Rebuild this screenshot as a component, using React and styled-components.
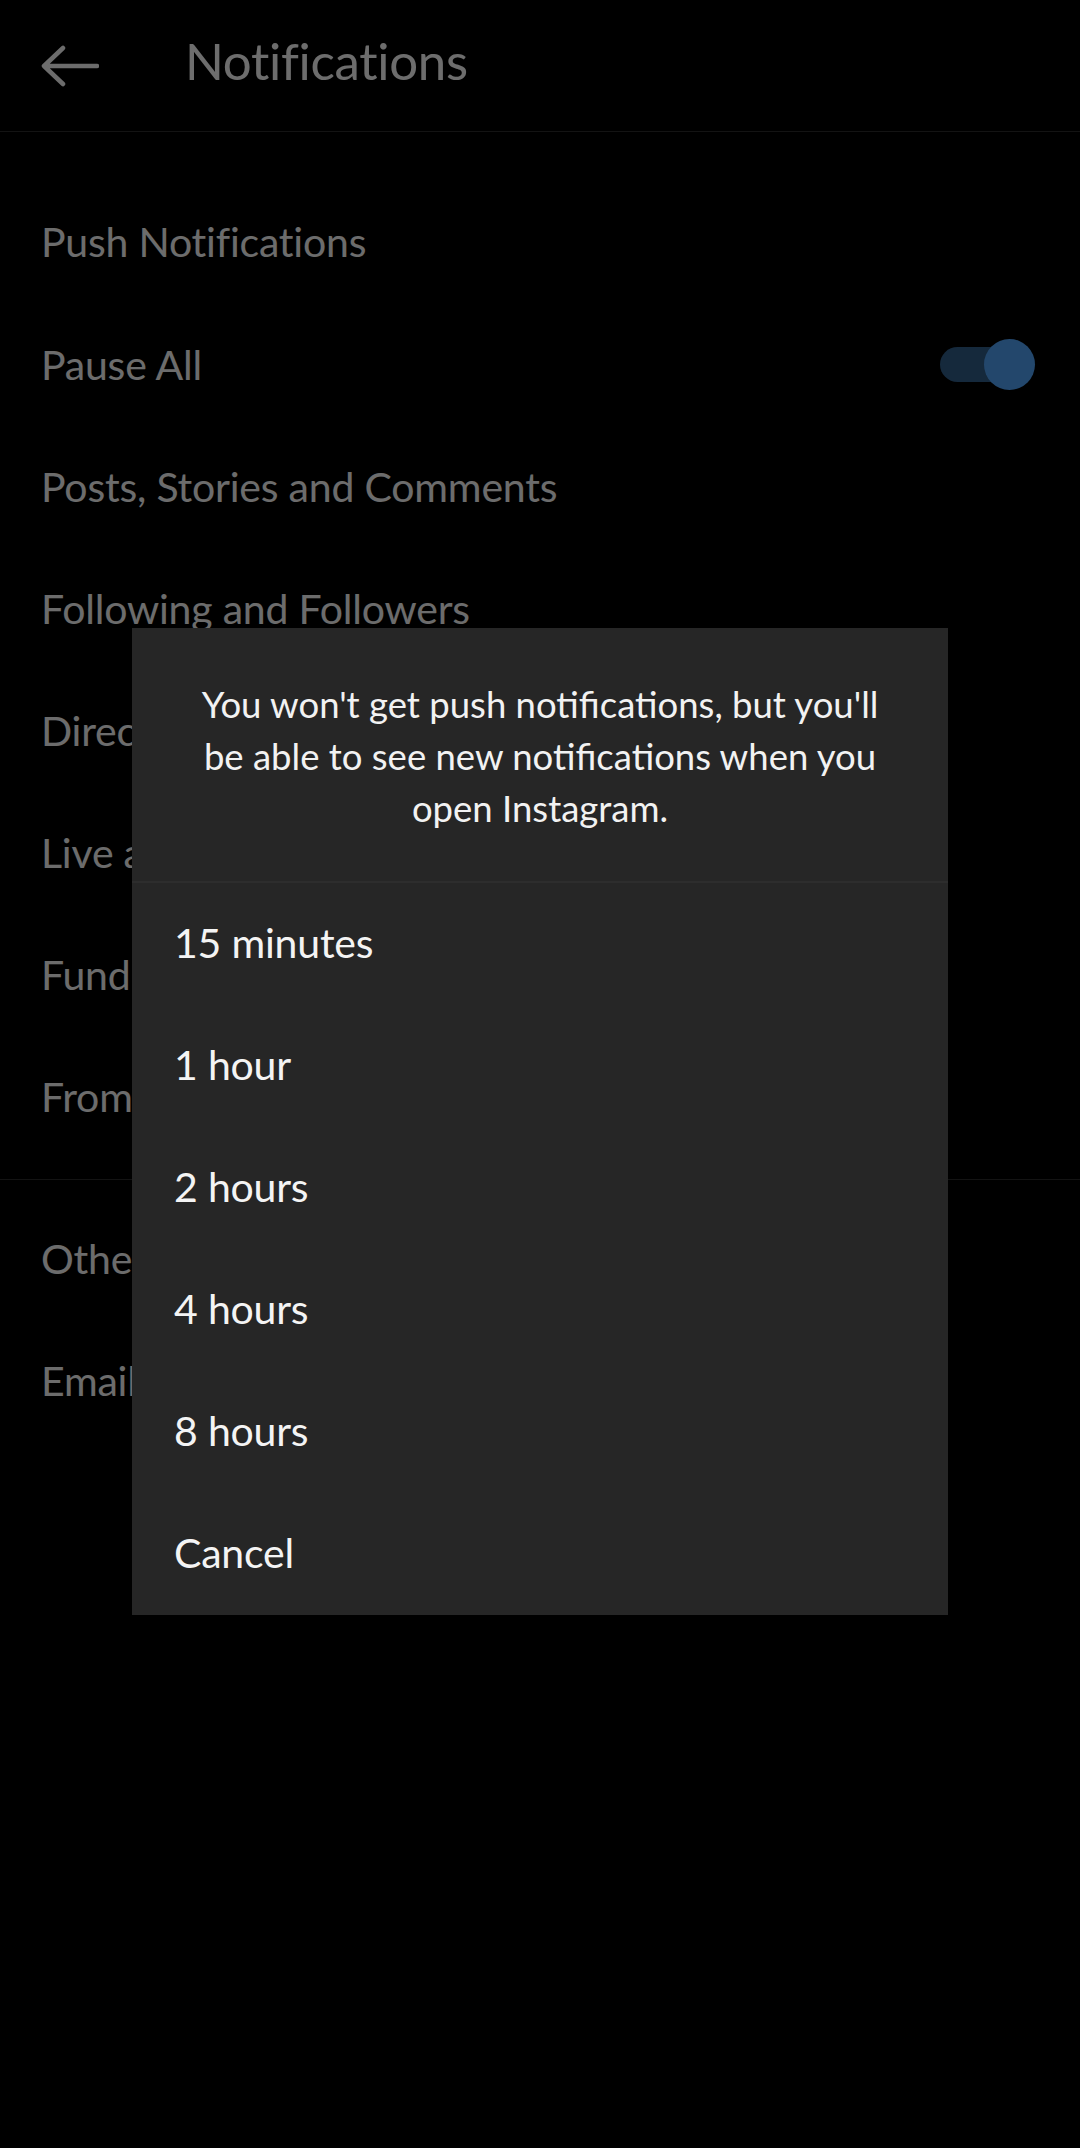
import React from 'react';
import styled, { createGlobalStyle } from 'styled-components';

const GlobalStyle = createGlobalStyle`
  html, body {
    margin: 0;
    padding: 0;
    background: #000;
  }
  body {
    font-family: Lato, "Noto Sans", sans-serif;
    -webkit-font-smoothing: antialiased;
  }
`;

const Screen = styled.div`
  position: relative;
  width: 1080px;
  height: 2148px;
  background: #000;
  overflow: hidden;
`;

const Header = styled.header`
  display: flex;
  align-items: center;
  height: 131px;
  padding-left: 41px;
  border-bottom: 1px solid #2c2c2c;
  box-sizing: content-box;

  svg {
    flex-shrink: 0;
  }
`;

const Title = styled.h1`
  margin: 0 0 10px 86px;
  font-size: 51px;
  font-weight: 400;
  color: #f2f2f2;
  letter-spacing: -0.3px;
`;

const Section = styled.section`
  padding: ${(p) => p.$top}px 0 ${(p) => p.$bottom}px;
  border-bottom: ${(p) => (p.$divider ? '1px solid #2c2c2c' : 'none')};
`;

const Row = styled.div`
  display: flex;
  align-items: center;
  justify-content: space-between;
  height: ${(p) => p.$h || 122}px;
  padding: 0 45px 0 41px;
  font-size: 41px;
  color: #f0f0f0;
  letter-spacing: -0.2px;
`;

const Toggle = styled.div`
  position: relative;
  width: 95px;
  height: 51px;
  display: flex;
  align-items: center;

  &::before {
    content: '';
    width: 80px;
    height: 35px;
    border-radius: 18px;
    background: #2f5b85;
  }

  &::after {
    content: '';
    position: absolute;
    right: 0;
    top: 0;
    width: 51px;
    height: 51px;
    border-radius: 50%;
    background: #4e9ef0;
  }
`;

const Backdrop = styled.div`
  position: absolute;
  inset: 0;
  background: rgba(0, 0, 0, 0.55);
  display: flex;
  flex-direction: column;
  align-items: center;
  padding-top: 628px;
`;

const Dialog = styled.div`
  width: 816px;
  background: #262626;
  display: flex;
  flex-direction: column;
`;

const Message = styled.p`
  margin: 0;
  padding: 50px 20px 47px;
  text-align: center;
  font-size: 36.5px;
  line-height: 52px;
  color: #f2f2f2;
  border-bottom: 2px solid #2d2d2d;
`;

const Option = styled.button`
  display: flex;
  align-items: center;
  height: 122px;
  padding: 0 0 4px 42px;
  border: none;
  background: transparent;
  font-family: inherit;
  font-size: 41px;
  color: #f4f4f4;
  text-align: left;
  letter-spacing: -0.2px;
`;

const mainRows = [
  'Posts, Stories and Comments',
  'Following and Followers',
  'Direct Messages',
  'Live and IGTV',
  'Fundraisers',
  'From Instagram',
];

const options = ['15 minutes', '1 hour', '2 hours', '4 hours', '8 hours', 'Cancel'];

const BackArrow = () => (
  <svg width="58" height="44" viewBox="0 0 58 44" fill="none">
    <path
      d="M56 22H4M22 4L3 22l19 18"
      stroke="#f0f0f0"
      strokeWidth="4.5"
      strokeLinecap="round"
      strokeLinejoin="round"
    />
  </svg>
);

export default function App() {
  return (
    <Screen>
      <GlobalStyle />
      <Header>
        <BackArrow />
        <Title>Notifications</Title>
      </Header>

      <Section $top={47} $bottom={22} $divider>
        <Row $h={124}>Push Notifications</Row>
        <Row>
          Pause All
          <Toggle />
        </Row>
        {mainRows.map((r) => (
          <Row key={r}>{r}</Row>
        ))}
      </Section>

      <Section $top={17} $bottom={0}>
        <Row>Other Notification Types</Row>
        <Row>Email and SMS</Row>
      </Section>

      <Backdrop>
        <Dialog>
          <Message>
            You won't get push notifications, but you'll
            <br />
            be able to see new notifications when you
            <br />
            open Instagram.
          </Message>
          {options.map((o) => (
            <Option key={o}>{o}</Option>
          ))}
        </Dialog>
      </Backdrop>
    </Screen>
  );
}
